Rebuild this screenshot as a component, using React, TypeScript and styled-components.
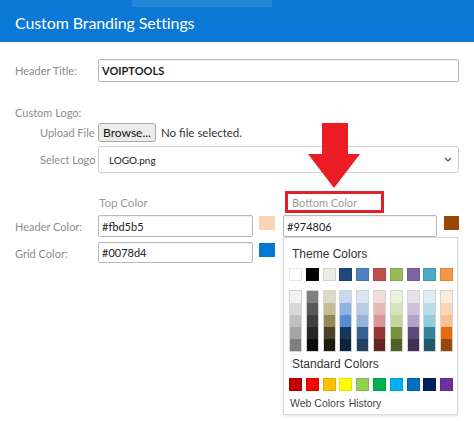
import React from 'react';
import styled, { createGlobalStyle } from 'styled-components';

const GlobalStyle = createGlobalStyle`
  html, body {
    margin: 0;
    padding: 0;
    background: #fff;
  }
  body {
    font-family: Lato, 'Noto Sans', sans-serif;
  }
`;

const THEME = ['#ffffff', '#000000', '#eeece1', '#1f497d', '#4f81bd', '#c0504d', '#9bbb59', '#8064a2', '#4bacc6', '#f79646'];

const SHADES = [
  ['#f2f2f2', '#d8d8d8', '#bfbfbf', '#a5a5a5', '#7f7f7f'],
  ['#7f7f7f', '#595959', '#3f3f3f', '#262626', '#0c0c0c'],
  ['#ddd9c3', '#c4bd97', '#938953', '#494429', '#1d1b10'],
  ['#c6d9f0', '#8db3e2', '#548dd4', '#17365d', '#0f243e'],
  ['#dbe5f1', '#b8cce4', '#95b3d7', '#366092', '#244061'],
  ['#f2dcdb', '#e5b9b7', '#d99694', '#953734', '#632423'],
  ['#ebf1dd', '#d7e3bc', '#c3d69b', '#76923c', '#4f6128'],
  ['#e5e0ec', '#ccc1d9', '#b2a2c7', '#5f497a', '#3f3151'],
  ['#dbeef3', '#b7dde8', '#92cddc', '#31859b', '#205867'],
  ['#fdeada', '#fbd5b5', '#fac08f', '#e36c09', '#974806'],
];

const STANDARD = ['#c00000', '#ff0000', '#ffc000', '#ffff00', '#92d050', '#00b050', '#00b0f0', '#0070c0', '#002060', '#7030a0'];

const Page = styled.div`
  position: relative;
  width: 474px;
  height: 421px;
  overflow: hidden;
  background: #fff;
`;

const Header = styled.header`
  height: 42px;
  background: #0a78d4;
  display: flex;
  flex-direction: column;
`;

const TabStrip = styled.div`
  height: 7px;
  display: flex;
  padding-left: 132px;
`;

const GhostTab = styled.div`
  width: 140px;
  background: rgba(255, 255, 255, 0.1);
`;

const Title = styled.h1`
  margin: 5px 0 0 15px;
  font-size: 16px;
  line-height: 22px;
  font-weight: 400;
  letter-spacing: -0.1px;
  color: #fff;
`;

const Form = styled.div`
  padding: 0 15px;
  display: flex;
  flex-direction: column;
`;

const Row = styled.div<{ $top: number; $indent?: number }>`
  display: flex;
  align-items: center;
  margin-top: ${(p) => p.$top}px;
  padding-left: ${(p) => p.$indent || 0}px;
`;

const Label = styled.label<{ $width: number }>`
  width: ${(p) => p.$width}px;
  flex: none;
  white-space: nowrap;
  font-size: 11px;
  color: #8c8c8c;
`;

const SectionLabel = styled.div`
  margin-top: 23px;
  font-size: 11px;
  line-height: 16px;
  color: #8c8c8c;
`;

const TextInput = styled.div<{ $width?: number; $height?: number }>`
  box-sizing: border-box;
  width: ${(p) => (p.$width ? `${p.$width}px` : '361px')};
  height: ${(p) => p.$height || 23}px;
  border: 1px solid #b8b8b8;
  border-radius: 2px;
  padding-left: 3px;
  display: flex;
  align-items: center;
  font-size: 11px;
  color: #1e1e1e;
  box-shadow: inset 0 1px 1px rgba(0, 0, 0, 0.06);
`;

const BoldValue = styled.span`
  font-weight: 700;
`;

const BrowseButton = styled.button`
  box-sizing: border-box;
  height: 19px;
  width: 58px;
  padding: 0;
  border: 1px solid #a9a9a9;
  border-radius: 3px;
  background: #ececec;
  font-family: inherit;
  font-size: 12px;
  color: #111;
`;

const FileNote = styled.span`
  margin-left: 5px;
  font-size: 11.5px;
  color: #333;
`;

const Select = styled.div`
  box-sizing: border-box;
  width: 361px;
  height: 27px;
  border: 1px solid #cfcfcf;
  border-radius: 3px;
  display: flex;
  align-items: center;
  justify-content: space-between;
  padding: 0 6px 0 10px;
  font-size: 10px;
  color: #222;
`;

const ColorHeading = styled.div<{ $boxed?: boolean; $width: number }>`
  box-sizing: border-box;
  width: ${(p) => p.$width}px;
  height: 22px;
  display: flex;
  align-items: center;
  white-space: nowrap;
  font-size: ${(p) => (p.$boxed ? 11 : 11.5)}px;
  color: #9a9a9a;
  padding-left: ${(p) => (p.$boxed ? 4 : 1)}px;
  border: ${(p) => (p.$boxed ? '3px solid #e3202a' : 'none')};
`;

const ColorRow = styled.div<{ $top: number }>`
  display: flex;
  align-items: flex-start;
  margin-top: ${(p) => p.$top}px;
`;

const ColorLabel = styled.div`
  width: 83px;
  flex: none;
  height: 22px;
  display: flex;
  align-items: center;
  font-size: 11px;
  color: #8c8c8c;
`;

const Swatch = styled.div<{ $gap: number; $width: number }>`
  flex: none;
  width: ${(p) => p.$width}px;
  height: 14px;
  margin: 1px 0 0 ${(p) => p.$gap}px;
`;

const Spacer = styled.div<{ $width: number }>`
  flex: none;
  width: ${(p) => p.$width}px;
`;

const PickerAnchor = styled.div`
  position: relative;
  margin-left: 8px;
`;

const Popover = styled.div`
  position: absolute;
  top: 22px;
  left: 0;
  box-sizing: border-box;
  width: 175px;
  background: #fff;
  border: 1px solid #d9d9d9;
  box-shadow: 0 1px 3px rgba(0, 0, 0, 0.12);
  padding: 8px 0 3px 5px;
  font-family: 'Liberation Sans', Arial, sans-serif;
  color: #333;
  z-index: 2;
`;

const PopTitle = styled.div<{ $top?: number }>`
  margin-top: ${(p) => p.$top || 0}px;
  padding-left: 3px;
  font-size: 12px;
  line-height: 16px;
`;

const SwatchGrid = styled.div<{ $top: number }>`
  margin-top: ${(p) => p.$top}px;
  display: grid;
  grid-template-columns: repeat(10, 13px);
  column-gap: 3.8px;
`;

const Chip = styled.div`
  box-sizing: border-box;
  height: 13px;
  border: 1px solid rgba(0, 0, 0, 0.1);
`;

const ShadeColumn = styled.div`
  box-sizing: border-box;
  height: 62px;
  border: 1px solid #d4d4d4;
  display: flex;
  flex-direction: column;
`;

const Shade = styled.div`
  flex: 1;
`;

const PopLinks = styled.div`
  margin-top: 4px;
  padding-left: 1px;
  display: flex;
  gap: 4px;
  font-size: 10.5px;
  line-height: 16px;
  color: #444;
`;

const Arrow = styled.svg`
  position: absolute;
  left: 308px;
  top: 123px;
  z-index: 3;
`;

export default function App() {
  return (
    <Page>
      <GlobalStyle />
      <Header>
        <TabStrip>
          <GhostTab />
        </TabStrip>
        <Title>Custom Branding Settings</Title>
      </Header>

      <Form>
        <Row $top={17}>
          <Label $width={83}>Header Title:</Label>
          <TextInput>
            <BoldValue>VOIPTOOLS</BoldValue>
          </TextInput>
        </Row>

        <SectionLabel>Custom Logo:</SectionLabel>

        <Row $top={2} $indent={25}>
          <Label $width={58}>Upload File</Label>
          <BrowseButton type="button">Browse...</BrowseButton>
          <FileNote>No file selected.</FileNote>
        </Row>

        <Row $top={4} $indent={25}>
          <Label $width={58}>Select Logo</Label>
          <Select>
            <span>LOGO.png</span>
            <svg width="8" height="5" viewBox="0 0 8 5">
              <path d="M1 1l3 3 3-3" fill="none" stroke="#555" strokeWidth="1.2" />
            </svg>
          </Select>
        </Row>

        <ColorRow $top={18}>
          <Spacer $width={83} />
          <ColorHeading $width={185}>Top Color</ColorHeading>
          <Spacer $width={2} />
          <ColorHeading $boxed $width={99}>Bottom Color</ColorHeading>
        </ColorRow>

        <ColorRow $top={2}>
          <ColorLabel>Header Color:</ColorLabel>
          <TextInput $width={155} $height={22}>#fbd5b5</TextInput>
          <Swatch $gap={6} $width={16} style={{ background: '#fbd5b5' }} />
          <PickerAnchor>
            <TextInput $width={154} $height={22}>#974806</TextInput>
            <Popover>
              <PopTitle>Theme Colors</PopTitle>
              <SwatchGrid $top={6}>
                {THEME.map((c) => (
                  <Chip key={c} style={{ background: c }} />
                ))}
              </SwatchGrid>
              <SwatchGrid $top={9}>
                {SHADES.map((col, i) => (
                  <ShadeColumn key={i}>
                    {col.map((c) => (
                      <Shade key={c} style={{ background: c }} />
                    ))}
                  </ShadeColumn>
                ))}
              </SwatchGrid>
              <PopTitle $top={4}>Standard Colors</PopTitle>
              <SwatchGrid $top={6}>
                {STANDARD.map((c) => (
                  <Chip key={c} style={{ background: c }} />
                ))}
              </SwatchGrid>
              <PopLinks>
                <span>Web Colors</span>
                <span>History</span>
              </PopLinks>
            </Popover>
          </PickerAnchor>
          <Swatch $gap={7} $width={15} style={{ background: '#974806' }} />
        </ColorRow>

        <ColorRow $top={5}>
          <ColorLabel>Grid Color:</ColorLabel>
          <TextInput $width={155} $height={21}>#0078d4</TextInput>
          <Swatch $gap={6} $width={16} style={{ background: '#0078d4' }} />
        </ColorRow>
      </Form>

      <Arrow width="52" height="65" viewBox="0 0 52 65">
        <polygon points="14,0 40,0 40,31 52,31 26,65 0,31 14,31" fill="#ec1c24" />
      </Arrow>
    </Page>
  );
}
